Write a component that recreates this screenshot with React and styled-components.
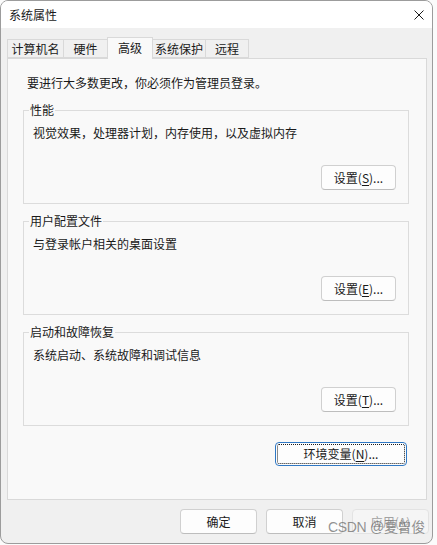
import React from 'react';
import styled, { createGlobalStyle } from 'styled-components';

const GlobalStyle = createGlobalStyle`
    html, body {
        margin: 0;
        padding: 0;
        background: #fbfbfb;
    }
    body {
        font-family: "Noto Sans CJK SC", "Liberation Sans", sans-serif;
        font-size: 12px;
        color: #1a1a1a;
    }
`;

const Window = styled.div`
    position: relative;
    box-sizing: border-box;
    width: 433px;
    height: 544px;
    border: 1px solid #9c9c9c;
    border-radius: 8px;
    background: #f0f0f0;
    overflow: hidden;
    display: flex;
    flex-direction: column;
`;

const TitleBar = styled.div`
    height: 27px;
    flex: none;
    background: #ffffff;
    display: flex;
    align-items: center;
    justify-content: space-between;
    padding: 0 6px 0 8px;
    line-height: 16px;
`;

const CloseButton = styled.div`
    width: 14px;
    height: 14px;
    display: flex;
    align-items: center;
    justify-content: center;
    margin-top: 1px;
`;

const Content = styled.div`
    padding: 0 5px 0 6px;
`;

const TabStrip = styled.div`
    height: 30px;
    display: flex;
    align-items: flex-end;
`;

const Tab = styled.div`
    box-sizing: border-box;
    width: ${props => props.width}px;
    height: ${props => (props.active ? 22 : 19)}px;
    margin-bottom: ${props => (props.active ? -1 : 0)}px;
    position: relative;
    z-index: ${props => (props.active ? 1 : 0)};
    display: flex;
    justify-content: center;
    align-items: ${props => (props.active ? 'flex-start' : 'center')};
    padding-top: ${props => (props.active ? 2 : 0)}px;
    line-height: 16px;
    background: ${props => (props.active ? '#f9f9f9' : '#f0f0f0')};
    border: 1px solid #d9d9d9;
    border-bottom: ${props => (props.active ? 'none' : '1px solid #d9d9d9')};
    margin-left: -1px;
    &:first-child {
        margin-left: 0;
    }
`;

const Panel = styled.div`
    box-sizing: border-box;
    height: 442px;
    background: #f9f9f9;
    border: 1px solid #d9d9d9;
    padding: 16px 17px 0 15px;
    display: flex;
    flex-direction: column;
`;

const Intro = styled.div`
    line-height: 16px;
    padding-left: 4px;
    margin-bottom: 11px;
`;

const Group = styled.fieldset`
    margin: 0 0 9px 0;
    padding: 0 12px 13px 9px;
    border: 1px solid #dcdcdc;
    min-width: 0;
    display: flex;
    flex-direction: column;
    legend {
        margin-left: -4px;
        padding: 0 1px;
        line-height: 16px;
    }
`;

const Description = styled.div`
    line-height: 16px;
    margin-top: 7px;
`;

const Button = styled.button`
    box-sizing: border-box;
    width: ${props => props.width || 75}px;
    height: ${props => props.height || 25}px;
    padding: 0;
    font-family: inherit;
    font-size: 12px;
    line-height: 16px;
    color: ${props => (props.disabled ? '#a2a2a2' : '#1a1a1a')};
    background: ${props => (props.disabled ? '#f5f5f5' : '#fdfdfd')};
    border: 1px solid ${props => (props.disabled ? '#e3e3e3' : '#d0d0d0')};
    border-bottom-color: ${props => (props.disabled ? '#e3e3e3' : '#bdbdbd')};
    border-radius: 4px;
    u {
        text-underline-offset: 2px;
    }
`;

const GroupButton = styled(Button)`
    align-self: flex-end;
    margin-top: 24px;
`;

const FocusButton = styled(Button)`
    align-self: flex-end;
    margin: 7px 2px 0 0;
    border: 1px solid #2f78c4;
    outline: 1px dotted #1a1a1a;
    outline-offset: -3px;
`;

const Footer = styled.div`
    display: flex;
    justify-content: flex-end;
    gap: 9px;
    padding: 9px 3px 0 0;
`;

const Watermark = styled.div`
    position: absolute;
    right: 7px;
    bottom: 7px;
    font-family: "Liberation Sans", "Noto Sans CJK SC", sans-serif;
    font-size: 14px;
    line-height: 17px;
    letter-spacing: -0.3px;
    color: rgba(110, 110, 110, 0.75);
    pointer-events: none;
`;

const tabs = [
    { label: '计算机名', width: 57 },
    { label: '硬件', width: 45 },
    { label: '高级', width: 46, active: true },
    { label: '系统保护', width: 54 },
    { label: '远程', width: 44 },
];

const groups = [
    { title: '性能', text: '视觉效果，处理器计划，内存使用，以及虚拟内存', key: 'S' },
    { title: '用户配置文件', text: '与登录帐户相关的桌面设置', key: 'E' },
    { title: '启动和故障恢复', text: '系统启动、系统故障和调试信息', key: 'T' },
];

export default function App() {
    return (
        <>
            <GlobalStyle />
            <Window>
                <TitleBar>
                    <span>系统属性</span>
                    <CloseButton>
                        <svg width="10" height="10" viewBox="0 0 10 10">
                            <path d="M0.5 0.5 L9.5 9.5 M9.5 0.5 L0.5 9.5" stroke="#1a1a1a" strokeWidth="1" fill="none" />
                        </svg>
                    </CloseButton>
                </TitleBar>
                <Content>
                    <TabStrip>
                        {tabs.map(tab => (
                            <Tab key={tab.label} width={tab.width} active={tab.active ? 1 : 0}>
                                {tab.label}
                            </Tab>
                        ))}
                    </TabStrip>
                    <Panel>
                        <Intro>要进行大多数更改，你必须作为管理员登录。</Intro>
                        {groups.map(group => (
                            <Group key={group.title}>
                                <legend>{group.title}</legend>
                                <Description>{group.text}</Description>
                                <GroupButton>
                                    设置(<u>{group.key}</u>)...
                                </GroupButton>
                            </Group>
                        ))}
                        <FocusButton width={132} height={24}>
                            环境变量(<u>N</u>)...
                        </FocusButton>
                    </Panel>
                </Content>
                <Footer>
                    <Button width={77}>确定</Button>
                    <Button width={77}>取消</Button>
                    <Button width={77} disabled>
                        应用(<u>A</u>)
                    </Button>
                </Footer>
                <Watermark>CSDN @夏曾俊</Watermark>
            </Window>
        </>
    );
}
